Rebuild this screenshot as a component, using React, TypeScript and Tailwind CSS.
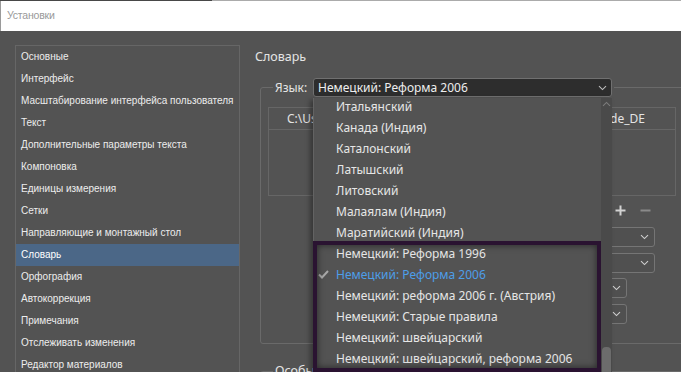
import React from 'react';

const sections = [
  'Основные',
  'Интерфейс',
  'Масштабирование интерфейса пользователя',
  'Текст',
  'Дополнительные параметры текста',
  'Компоновка',
  'Единицы измерения',
  'Сетки',
  'Направляющие и монтажный стол',
  'Словарь',
  'Орфография',
  'Автокоррекция',
  'Примечания',
  'Отслеживать изменения',
  'Редактор материалов',
  'Черный цвет',
];

const languages = [
  'Итальянский',
  'Канада (Индия)',
  'Каталонский',
  'Латышский',
  'Литовский',
  'Малаялам (Индия)',
  'Маратийский (Индия)',
  'Немецкий: Реформа 1996',
  'Немецкий: Реформа 2006',
  'Немецкий: реформа 2006 г. (Австрия)',
  'Немецкий: Старые правила',
  'Немецкий: швейцарский',
  'Немецкий: швейцарский, реформа 2006',
  'Норвежский: букмол',
];

const selected = 'Немецкий: Реформа 2006';

function Chevron({ className = '' }: { className?: string }) {
  return (
    <svg width="9" height="6" viewBox="0 0 9 6" className={className}>
      <path d="M1 1.2 L4.5 4.6 L8 1.2" fill="none" stroke="currentColor" strokeWidth="1.1" />
    </svg>
  );
}

function SmallSelect({ width, right }: { width: string; right: string }) {
  return (
    <div className={`self-end ${width} ${right} h-[20px] rounded-[3px] border border-[#757575] bg-[#505050] flex items-center justify-end pr-[5px] text-[#cfcfcf]`}>
      <Chevron />
    </div>
  );
}

export default function App() {
  return (
    <div className="relative w-[681px] h-[372px] overflow-hidden bg-[#535353] flex flex-col font-['Noto_Sans',sans-serif] text-[#e4e4e4]">
      {/* window title */}
      <div className="flex h-px shrink-0">
        <div className="w-[212px] bg-[#474747]" />
        <div className="flex-1 bg-[#ababab]" />
      </div>
      <div className="h-[30px] shrink-0 bg-white border-l border-[#9a9a9a] flex items-center pl-[6px] font-['Liberation_Sans',sans-serif] text-[10.5px] tracking-[-0.2px] text-[#999999]">
        Установки
      </div>

      <div className="flex flex-1 min-h-0">
        {/* sections list */}
        <div className="w-[255px] shrink-0 pl-[15px] pt-[14px]">
          <div className="w-[225px] h-[400px] border border-[#666666] font-['Liberation_Sans',sans-serif] text-[10px] text-[#ededed]">
            {sections.map((s) => (
              <div
                key={s}
                className={`h-[22px] leading-[22px] pl-[5px] whitespace-nowrap ${s === 'Словарь' ? 'bg-[#4b6787] text-white' : ''}`}
              >
                {s}
              </div>
            ))}
          </div>
        </div>

        {/* dictionary panel */}
        <div className="flex-1 min-w-0 flex flex-col">
          <div className="mt-[17px] h-[18px] leading-[18px] text-[12.5px] text-[#e4e4e4]">Словарь</div>
          <div className="mt-[1px] h-px bg-[#6a6a6a]" />

          <fieldset className="mt-[11px] ml-[5px] w-[430px] h-[266px] shrink-0 border border-[#6a6a6a] rounded-[3px] flex flex-col">
            <legend className="ml-[12px] px-[2px] flex items-center">
              <span className="w-[38px] text-[12px] leading-[19px]">Язык:</span>
              <div className="w-[299px] h-[19px] rounded-[3px] border border-[#707070] bg-[#2d2d2d] flex items-center pl-[4px] pr-[4px] text-[12px] text-[#eeeeee]">
                <span className="flex-1 leading-[17px]">Немецкий: Реформа 2006</span>
                <Chevron className="text-[#bdbdbd]" />
              </div>
            </legend>

            <div className="mt-[10px] ml-[7px] w-[408px] h-[89px] shrink-0 border border-[#666666]">
              <div className="h-[22px] border-b border-[#666666] flex items-center pl-[18px] pr-[30px] text-[12px] whitespace-nowrap overflow-hidden">
                <span className="truncate min-w-0 flex-1">C:\Users\Admin\AppData\Roaming\Adobe\Linguistics\Dictionaries\Hunspell</span>
                <span>\de_DE</span>
              </div>
            </div>

            <div className="mt-[6px] h-[16px] flex items-center pl-[354px] gap-[14px]">
              <svg width="11" height="11" viewBox="0 0 11 11">
                <path d="M5.5 0.5 V10.5 M0.5 5.5 H10.5" stroke="#d2d2d2" strokeWidth="2" />
              </svg>
              <svg width="11" height="11" viewBox="0 0 11 11">
                <path d="M0.5 5.5 H10.5" stroke="#8a8a8a" strokeWidth="2" />
              </svg>
            </div>

            <div className="mt-[9px] flex flex-col">
              <SmallSelect width="w-[170px]" right="mr-[34px]" />
            </div>
            <div className="mt-[6px] flex flex-col">
              <SmallSelect width="w-[170px]" right="mr-[34px]" />
            </div>
            <div className="mt-[5px] flex flex-col">
              <SmallSelect width="w-[90px]" right="mr-[62px]" />
            </div>
            <div className="mt-[6px] flex flex-col">
              <SmallSelect width="w-[90px]" right="mr-[62px]" />
            </div>
          </fieldset>

          <fieldset className="mt-[18px] ml-[5px] w-[430px] h-[80px] shrink-0 border border-[#6a6a6a] rounded-[3px]">
            <legend className="ml-[12px] px-[2px] text-[12.5px] leading-[18px]">Особые параметры</legend>
          </fieldset>
        </div>
      </div>

      {/* open language dropdown */}
      <div className="absolute left-[313px] top-[98px] w-[299px] h-[290px] bg-[#535353] border-l border-[#636363] shadow-[-3px_2px_5px_rgba(0,0,0,0.35)] overflow-hidden">
        <div className="-mt-[2px] pr-[11px]">
          {languages.map((l) => (
            <div
              key={l}
              className={`relative h-[21px] leading-[21px] pl-[22px] text-[12px] whitespace-nowrap ${l === selected ? 'text-[#4d9ee9]' : 'text-[#e6e6e6]'}`}
            >
              {l === selected && (
                <svg width="11" height="9" viewBox="0 0 11 9" className="absolute left-[4px] top-[6px]">
                  <path d="M1 4.5 L4 7.5 L10 1" fill="none" stroke="#a8a8a8" strokeWidth="2" />
                </svg>
              )}
              {l}
            </div>
          ))}
        </div>
        <div className="absolute right-0 top-0 bottom-0 w-[11px] bg-[#4a4a4a] flex flex-col items-center">
          <svg width="9" height="6" viewBox="0 0 9 6" className="mt-[3px] text-[#7c7c7c]">
            <path d="M1 4.8 L4.5 1.4 L8 4.8" fill="none" stroke="currentColor" strokeWidth="1.1" />
          </svg>
          <div className="mt-[240px] w-[9px] h-[40px] rounded-t-[4px] bg-[#6c6c6c]" />
        </div>
      </div>

      {/* highlight frame */}
      <div className="absolute left-[313px] top-[241px] w-[288px] h-[131px] border-[4px] border-[#2a1331] shadow-[inset_0_0_7px_rgba(0,0,0,0.55)] pointer-events-none" />
    </div>
  );
}
